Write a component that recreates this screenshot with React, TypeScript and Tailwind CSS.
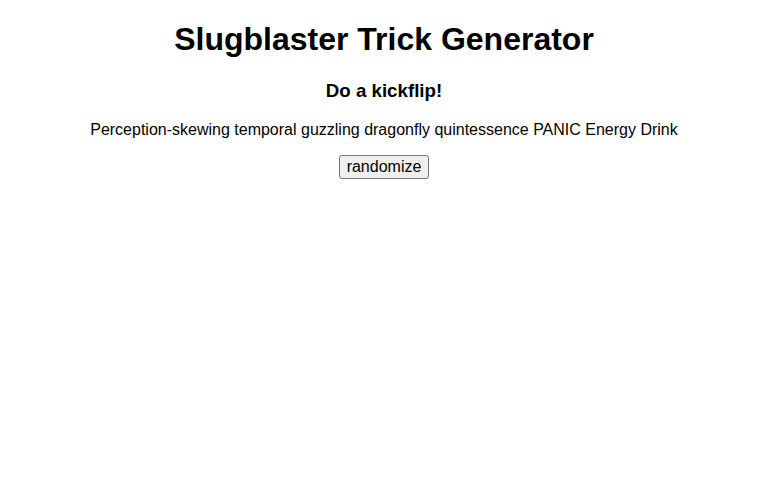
const App = () => {
  return (
    <main className="min-h-screen bg-white text-center text-black font-['Liberation_Sans',Arial,sans-serif]">
      <h1 className="pt-[21px] text-[32px] font-bold leading-[37px]">
        Slugblaster Trick Generator
      </h1>

      {/* current trick */}
      <h3 className="mt-[22px] text-[18.72px] font-bold leading-[22px]">
        Do a kickflip!
      </h3>
      <p className="mt-[19px] text-base leading-[18px]">
        Perception-skewing temporal guzzling dragonfly quintessence PANIC Energy Drink
      </p>

      <div className="mt-[16px] flex justify-center">
        <button className="rounded-[3px] border border-[#767676] bg-[#efefef] px-[7px] py-[2px] text-base leading-[18px] text-black hover:bg-[#e5e5e5]">
          randomize
        </button>
      </div>
    </main>
  );
};

export default App;
